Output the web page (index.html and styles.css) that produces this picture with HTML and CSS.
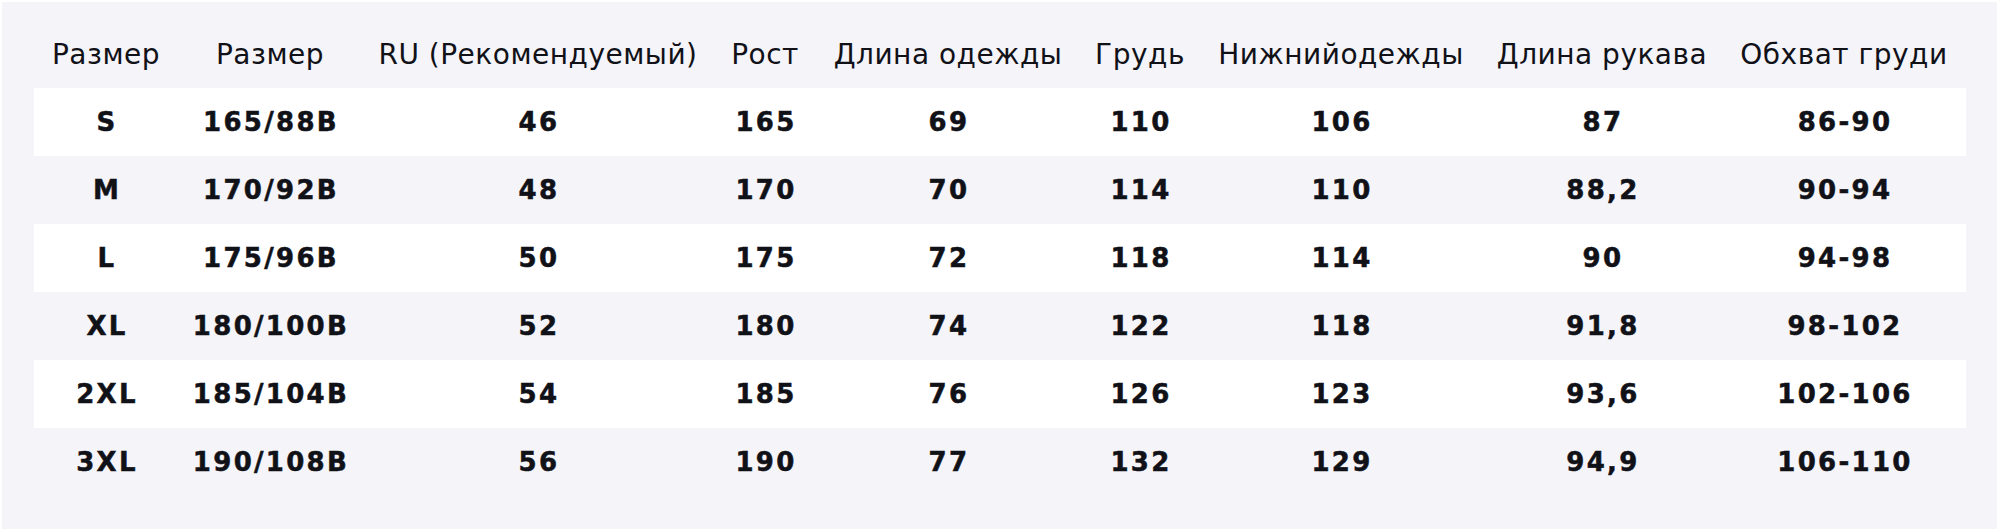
FILE: index.html
```html
<!DOCTYPE html>
<html lang="ru">
<head>
<meta charset="utf-8">
<title>Таблица размеров</title>
<link rel="stylesheet" href="styles.css">
</head>
<body>
<div class="panel">
  <table class="sizes">
    <colgroup>
      <col class="c1"><col class="c2"><col class="c3"><col class="c4"><col class="c5"><col class="c6"><col class="c7"><col class="c8"><col class="c9">
    </colgroup>
    <thead>
      <tr>
        <th>Размер</th><th>Размер</th><th>RU (Рекомендуемый)</th><th>Рост</th><th>Длина одежды</th><th>Грудь</th><th>Нижнийодежды</th><th>Длина рукава</th><th>Обхват груди</th>
      </tr>
    </thead>
    <tbody>
      <tr class="odd"><td>S</td><td>165/88B</td><td>46</td><td>165</td><td>69</td><td>110</td><td>106</td><td>87</td><td>86-90</td></tr>
      <tr><td>M</td><td>170/92B</td><td>48</td><td>170</td><td>70</td><td>114</td><td>110</td><td>88,2</td><td>90-94</td></tr>
      <tr class="odd"><td>L</td><td>175/96B</td><td>50</td><td>175</td><td>72</td><td>118</td><td>114</td><td>90</td><td>94-98</td></tr>
      <tr><td>XL</td><td>180/100B</td><td>52</td><td>180</td><td>74</td><td>122</td><td>118</td><td>91,8</td><td>98-102</td></tr>
      <tr class="odd"><td>2XL</td><td>185/104B</td><td>54</td><td>185</td><td>76</td><td>126</td><td>123</td><td>93,6</td><td>102-106</td></tr>
      <tr><td>3XL</td><td>190/108B</td><td>56</td><td>190</td><td>77</td><td>132</td><td>129</td><td>94,9</td><td>106-110</td></tr>
    </tbody>
  </table>
</div>
</body>
</html>
```
FILE: styles.css
```css
html, body {
  margin: 0;
  padding: 0;
  background: #ffffff;
}
body {
  padding: 2px 3px 3px 2px;
  font-family: "DejaVu Sans", "Verdana", sans-serif;
  color: #111118;
}
.panel {
  background: #f4f4f9;
  padding: 18px 31px 33px 32px;
  height: 527px;
  box-sizing: border-box;
}
.sizes {
  width: 1932px;
  border-collapse: collapse;
  table-layout: fixed;
}
.c1 { width: 144px; }
.c2 { width: 184px; }
.c3 { width: 352px; }
.c4 { width: 102px; }
.c5 { width: 264px; }
.c6 { width: 120px; }
.c7 { width: 282px; }
.c8 { width: 240px; }
.c9 { width: 244px; }
.sizes th {
  height: 68px;
  padding: 0;
  font-size: 28px;
  letter-spacing: 0.5px;
  font-weight: normal;
  text-align: center;
  white-space: nowrap;
  color: #111118;
}
.sizes td {
  height: 68px;
  padding: 0 0 0 2px;
  font-size: 26px;
  letter-spacing: 2.3px;
  font-weight: bold;
  -webkit-text-stroke: 0.5px #111118;
  text-align: center;
  white-space: nowrap;
}
.sizes tr.odd td {
  background: #ffffff;
}
```
